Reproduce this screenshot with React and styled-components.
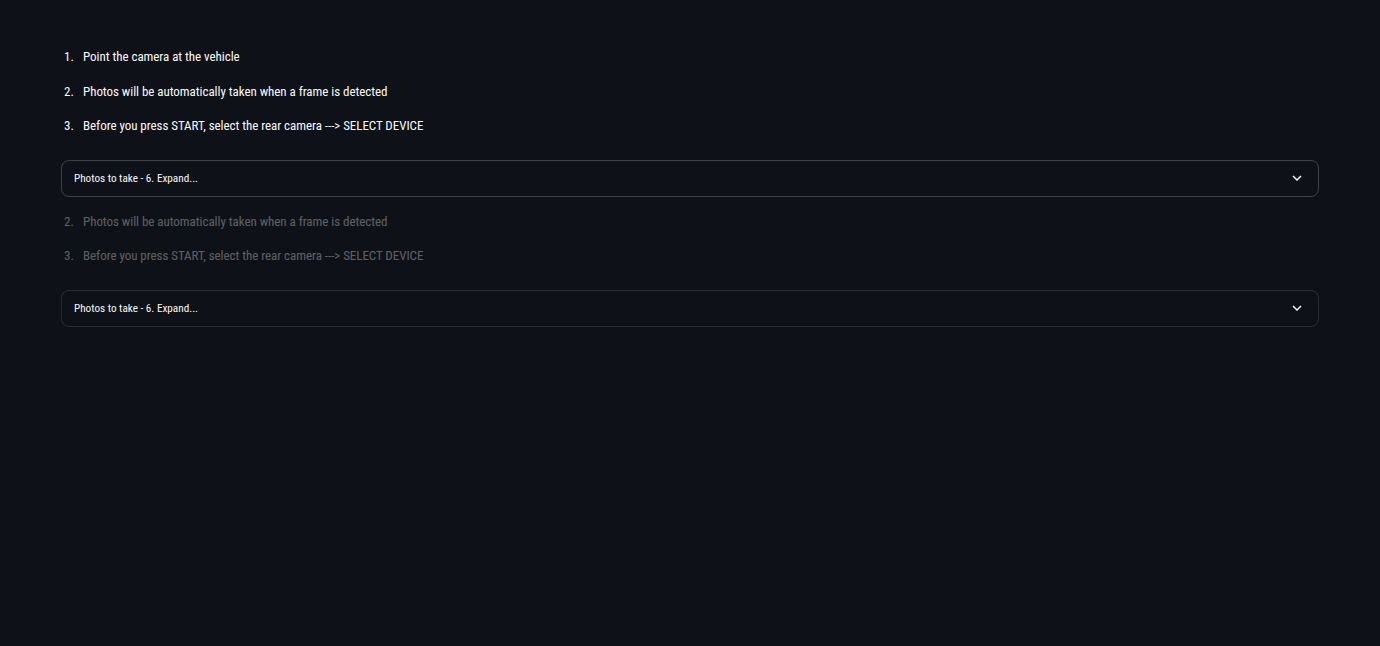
import React from "react";
import styled, { createGlobalStyle } from "styled-components";

const Global = createGlobalStyle`
  html, body { margin: 0; padding: 0; background: #0e1117; }
  body { font-family: "Roboto Condensed", Roboto, sans-serif; color: #fafafa; -webkit-font-smoothing: antialiased; }
`;

const Page = styled.main`
  min-height: 646px;
  background: #0e1117;
  padding: 44px 61px 0 61px;
  box-sizing: border-box;
  display: flex;
  flex-direction: column;
`;

const List = styled.ol`
  list-style: none;
  margin: 0;
  padding: 0;
  display: flex;
  flex-direction: column;
  gap: 9px;
  opacity: ${(p) => (p.$faded ? 0.33 : 1)};
`;

const Item = styled.li`
  display: flex;
  font-size: 13px;
  letter-spacing: -0.05px;
  line-height: 25.6px;
  height: 25.6px;
`;

const Num = styled.span`
  width: 19px;
  padding-left: 3px;
  flex: none;
`;

const Expander = styled.details`
  margin: ${(p) => p.$mt}px 0 ${(p) => p.$mb}px;
  border: 1px solid rgba(250, 250, 250, ${(p) => p.$border});
  border-radius: 8px;
  height: 37px;
  box-sizing: border-box;
`;

const Summary = styled.summary`
  list-style: none;
  display: flex;
  align-items: center;
  justify-content: space-between;
  height: 35px;
  padding: 0 12px 0 12px;
  font-size: 11.2px;
  cursor: pointer;
  &::-webkit-details-marker { display: none; }
`;

const Chevron = () => (
  <svg width="18" height="18" viewBox="0 0 24 24" fill="#fafafa">
    <path d="M16.59 8.59L12 13.17 7.41 8.59 6 10l6 6 6-6z" />
  </svg>
);

const steps = [
  "Point the camera at the vehicle",
  "Photos will be automatically taken when a frame is detected",
  "Before you press START, select the rear camera ---> SELECT DEVICE",
];

export default function App() {
  return (
    <>
      <Global />
      <Page>
        <List>
          {steps.map((s, i) => (
            <Item key={i}>
              <Num>{i + 1}.</Num>
              {s}
            </Item>
          ))}
        </List>
        <Expander $mt={21} $mb={12} $border={0.2}>
          <Summary>
            Photos to take - 6. Expand...
            <Chevron />
          </Summary>
        </Expander>
        <List $faded>
          {steps.slice(1).map((s, i) => (
            <Item key={i}>
              <Num>{i + 2}.</Num>
              {s}
            </Item>
          ))}
        </List>
        <Expander $mt={21} $mb={0} $border={0.12}>
          <Summary>
            Photos to take - 6. Expand...
            <Chevron />
          </Summary>
        </Expander>
      </Page>
    </>
  );
}
